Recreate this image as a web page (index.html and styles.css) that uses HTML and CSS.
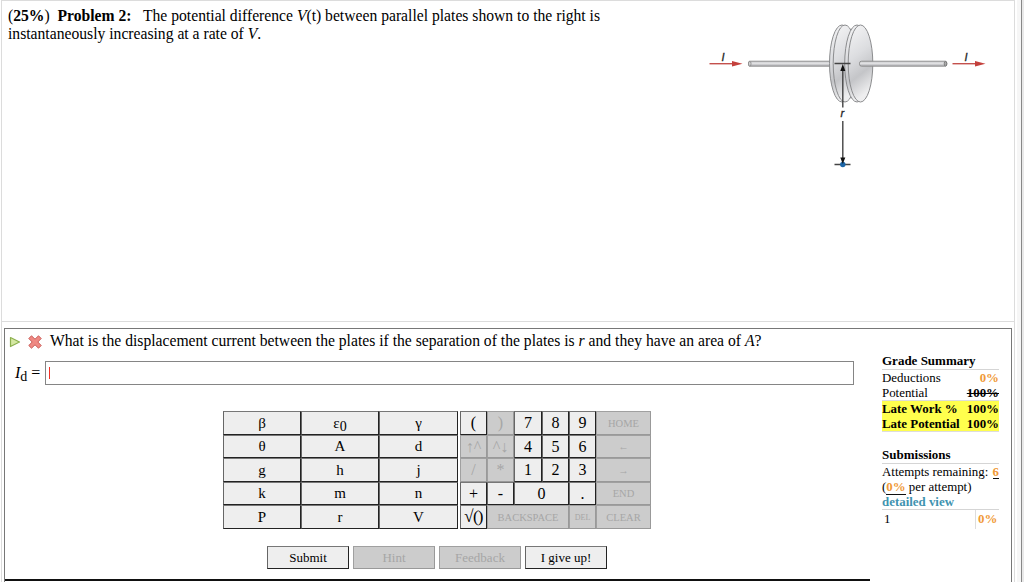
FILE: index.html
```html
<!DOCTYPE html>
<html lang="en">
<head>
  <meta charset="UTF-8">
  <title>Problem 2</title>
  <link rel="stylesheet" href="styles.css">
</head>
<body>
  <div class="page">
    <!-- Problem statement -->
    <div class="statement">
      <div class="statement-text">
        <div class="line1"><span class="lead">(<b>25%</b>)&nbsp; <b>Problem 2:</b></span><span>The potential difference <i>V</i>(t) between parallel plates shown to the right is</span></div>
        <div class="line2">instantaneously increasing at a rate of <i>V</i>.</div>
      </div>
      <svg class="figure" width="290" height="160" viewBox="0 0 290 160">
        <defs>
          <linearGradient id="plate" x1="0" y1="0" x2="0.25" y2="1">
            <stop offset="0" stop-color="#f6f6f7"/>
            <stop offset="0.45" stop-color="#dcdde0"/>
            <stop offset="0.72" stop-color="#c4c5c8"/>
            <stop offset="1" stop-color="#eeeeef"/>
          </linearGradient>
          <linearGradient id="rod" x1="0" y1="0" x2="0" y2="1">
            <stop offset="0" stop-color="#bdbec0"/>
            <stop offset="0.4" stop-color="#e6e6e8"/>
            <stop offset="1" stop-color="#a9aaad"/>
          </linearGradient>
        </defs>
        <!-- left rod and arrow -->
        <path d="M9.500 53.700H34" stroke="#c4504c" stroke-width="1.400"/>
        <path d="M32 51L42.500 53.700L32 56.500Z" fill="#c4403c"/>
        <text class="fig-label" x="21.500" y="51">I</text>
        <rect x="48.500" y="51.200" width="84" height="5" rx="1.500" fill="url(#rod)" stroke="#8b8b8b" stroke-width="0.900"/>
        <ellipse cx="49.800" cy="53.700" rx="1.200" ry="2.400" fill="#ddd" stroke="#777" stroke-width="0.700"/>
        <!-- plates -->
        <g fill="url(#plate)" stroke="#8b8c8e" stroke-width="1">
          <ellipse cx="142" cy="53.500" rx="12.500" ry="38.500"/>
          <ellipse cx="145" cy="53.500" rx="11.800" ry="38.500"/>
          <ellipse cx="157" cy="53.500" rx="12.300" ry="38.500"/>
          <ellipse cx="160.500" cy="53.500" rx="12.300" ry="38.500"/>
        </g>
        <!-- right rod and arrow -->
        <rect x="159.500" y="51.200" width="87.300" height="5" rx="2" fill="url(#rod)" stroke="#8b8b8b" stroke-width="0.900"/>
        <ellipse cx="245.500" cy="53.700" rx="1.300" ry="2.400" fill="#aaa" stroke="#666" stroke-width="0.700"/>
        <path d="M252.500 53.700H277" stroke="#c4504c" stroke-width="1.400"/>
        <path d="M275 51L285.500 53.700L275 56.500Z" fill="#c4403c"/>
        <text class="fig-label" x="264.500" y="51">I</text>
        <!-- radius -->
        <path d="M134.500 53.500H150.500M134.500 154.500H150.500M142.800 60V97.500M142.800 111V148" stroke="#444" stroke-width="1.400" fill="none"/>
        <path d="M142.800 54L145.300 61H140.300Z" fill="#111"/>
        <circle cx="142.800" cy="154.500" r="2.700" fill="#1c66a8"/>
        <path d="M142.800 154L140.300 147.500H145.300Z" fill="#111"/>
        <text class="fig-label" x="140.500" y="106.500">r</text>
      </svg>
    </div>

    <!-- Question -->
    <div class="question">
      <div class="work">
        <div class="prompt">
          <svg width="12" height="12" viewBox="0 0 12 12"><path d="M1.500 1.500L10.500 6L1.500 10.500Z" fill="#d5e8a3" stroke="#8db04f" stroke-width="1.200" stroke-linejoin="round"/></svg>
          <svg width="14" height="14" viewBox="0 0 14 14"><path d="M3.500 0.800L7 4.200L10.500 0.800L13.200 3.500L9.800 7L13.200 10.500L10.500 13.200L7 9.800L3.500 13.200L0.800 10.500L4.200 7L0.800 3.500Z" fill="#ef8983" stroke="#ca5d59" stroke-width="1" stroke-linejoin="round"/></svg>
          <span>What is the displacement current between the plates if the separation of the plates is <i>r</i> and they have an area of <i>A</i>?</span>
        </div>
        <div class="answer">
          <div class="answer-label"><i>I</i><sub>d</sub> =</div>
          <div class="answer-box"><div class="caret"></div></div>
        </div>

        <div class="pads">
          <div class="pad symbols">
            <div class="key">β</div><div class="key"><span>ε<sub>0</sub></span></div><div class="key">γ</div>
            <div class="key">θ</div><div class="key">A</div><div class="key">d</div>
            <div class="key">g</div><div class="key">h</div><div class="key">j</div>
            <div class="key">k</div><div class="key">m</div><div class="key">n</div>
            <div class="key">P</div><div class="key">r</div><div class="key">V</div>
          </div>
          <div class="pad numbers">
            <div class="key">(</div><div class="key off">)</div><div class="key">7</div><div class="key">8</div><div class="key">9</div><div class="key off word">HOME</div>
            <div class="key off">↑^</div><div class="key off">^↓</div><div class="key">4</div><div class="key">5</div><div class="key">6</div><div class="key off word">←</div>
            <div class="key off">/</div><div class="key off">*</div><div class="key">1</div><div class="key">2</div><div class="key">3</div><div class="key off word">→</div>
            <div class="key">+</div><div class="key">-</div><div class="key wide">0</div><div class="key">.</div><div class="key off word">END</div>
            <div class="key root">√()</div><div class="key off wide3 word">BACKSPACE</div><div class="key off small">DEL</div><div class="key off word">CLEAR</div>
          </div>
        </div>

        <div class="actions">
          <div class="btn">Submit</div>
          <div class="btn off">Hint</div>
          <div class="btn off">Feedback</div>
          <div class="btn">I give up!</div>
        </div>
        <div class="rule"></div>
      </div>

      <div class="summary">
        <div class="heading">Grade Summary</div>
        <div class="row"><span>Deductions</span><b class="orange">0%</b></div>
        <div class="row"><span>Potential</span><b class="struck">100%</b></div>
        <div class="late">
          <div class="row"><span>Late Work %</span><span>100%</span></div>
          <div class="row"><span>Late Potential</span><span>100%</span></div>
        </div>
        <div class="heading submissions">Submissions</div>
        <div class="row"><span>Attempts remaining:</span><b class="orange under">6</b></div>
        <div class="row"><span>(<b class="orange under">0%</b> per attempt)</span></div>
        <div class="row"><b class="link">detailed view</b></div>
        <div class="attempt"><span>1</span><b class="orange">0%</b></div>
      </div>
    </div>
  </div>
  <div class="edge"></div>
</body>
</html>
```
FILE: styles.css
```css
body {
  margin: 0;
  display: flex;
  height: 582px;
  overflow: hidden;
  background: #fff;
  color: #000;
  font-family: "Liberation Serif", "Times New Roman", serif;
  font-size: 15px;
}
.page {
  box-sizing: border-box;
  width: 1014px;
  height: 582px;
  margin-left: 1px;
  border: 1px solid #dcdcdc;
  border-bottom: none;
}
.edge {
  box-sizing: border-box;
  flex: 1;
  margin-left: 2px;
  border-left: 4px solid #f6f6f6;
  background: linear-gradient(to right, #888 1px, #e9e9e9 1px);
}

/* problem statement */
.statement {
  box-sizing: border-box;
  display: flex;
  height: 321px;
  border-bottom: 1px solid #dcdcdc;
}
.statement-text {
  width: 698px;
  padding: 6px 0 0 6px;
  box-sizing: border-box;
  font-size: 15.650px;
  line-height: 18px;
  white-space: nowrap;
}
.lead {
  display: inline-block;
  width: 135px;
}
.figure {
  margin-top: 9px;
}
.fig-label {
  font: italic 11px "Liberation Sans", Arial, sans-serif;
  fill: #222;
  stroke: #222;
  stroke-width: 0.3px;
}

/* question */
.question {
  box-sizing: border-box;
  display: flex;
  width: 1008px;
  height: 254px;
  margin: 6px 0 0 2px;
  border: 1px solid #777;
  border-bottom: none;
}
.work {
  width: 865px;
}
.prompt {
  display: flex;
  align-items: center;
  height: 23px;
  padding-left: 4px;
  font-size: 15.650px;
  white-space: nowrap;
}
.prompt svg {
  margin: 3px 7px 0 0;
}
.prompt span {
  margin-left: 1px;
}
.answer {
  display: flex;
  margin-top: 9px;
}
.answer-label {
  width: 40px;
  padding-left: 10px;
  box-sizing: border-box;
  line-height: 24px;
  font-size: 16px;
  white-space: nowrap;
}
.answer-label sub {
  font-size: 14px;
  line-height: 0;
  vertical-align: -3px;
}
.answer-box {
  box-sizing: border-box;
  width: 809px;
  height: 24px;
  padding: 5px 0 0 3px;
  border: 1px solid #858585;
}
.caret {
  width: 1px;
  height: 12px;
  background: #f33025;
}

/* key pads */
.pads {
  display: flex;
  gap: 2px;
  margin: 26px 0 0 218px;
}
.pad {
  display: grid;
  grid-template-rows: 24px 23px 24px 23px 24px;
}
.symbols {
  grid-template-columns: 78px 78px 79px;
}
.numbers {
  grid-template-columns: 27px 27px 28px 27px 27px 55px;
}
.key,
.btn {
  box-sizing: border-box;
  display: flex;
  align-items: center;
  justify-content: center;
  background: #eee;
  border: 1px solid #222;
  border-top-color: #777;
  border-left-color: #666;
  white-space: nowrap;
}
.key {
  overflow: hidden;
}
.key sub {
  line-height: 0;
  font-size: 14px;
  vertical-align: -3px;
}
.numbers .key {
  font-size: 16px;
}
.numbers .root {
  font-size: 17px;
  letter-spacing: -0.8px;
}
.key.wide {
  grid-column: span 2;
}
.key.wide3 {
  grid-column: span 3;
}
.numbers .word {
  font-size: 10.500px;
}
.numbers .small {
  font-size: 8px;
}
.key.off,
.btn.off {
  background: #ccc;
  color: #a6a6a6;
  border-color: #a0a0a0 #999 #999 #a0a0a0;
}

/* buttons */
.actions {
  display: flex;
  gap: 4px;
  margin: 17px 0 0 262px;
}
.btn {
  width: 82px;
  height: 23px;
  font-size: 13px;
}
.rule {
  height: 2px;
  margin-top: 10px;
  background: #111;
}

/* grade summary */
.summary {
  width: 117px;
  margin: 24px 0 0 12px;
  font-size: 12.900px;
}
.heading {
  height: 16px;
  line-height: 16px;
  font-size: 13px;
  font-weight: bold;
  border-bottom: 1px solid #d5d5d5;
}
.row {
  display: flex;
  justify-content: space-between;
  height: 15px;
  line-height: 16px;
  white-space: nowrap;
}
.late {
  background: #ffff4d;
  font-weight: bold;
  border-top: 1px solid #ddd;
  border-bottom: 1px solid #ddd;
}
.submissions {
  margin-top: 15px;
}
.orange {
  color: #f09a38;
}
.struck {
  text-decoration: line-through;
}
.under {
  border-bottom: 1px solid #111;
}
.link {
  color: #3f93b0;
}
.attempt {
  display: flex;
  border-top: 1px solid #d5d5d5;
  line-height: 19px;
}
.attempt span {
  width: 91px;
  padding-left: 2px;
  border-right: 1px solid #ddd;
}
.attempt b {
  padding-left: 2px;
}
```
